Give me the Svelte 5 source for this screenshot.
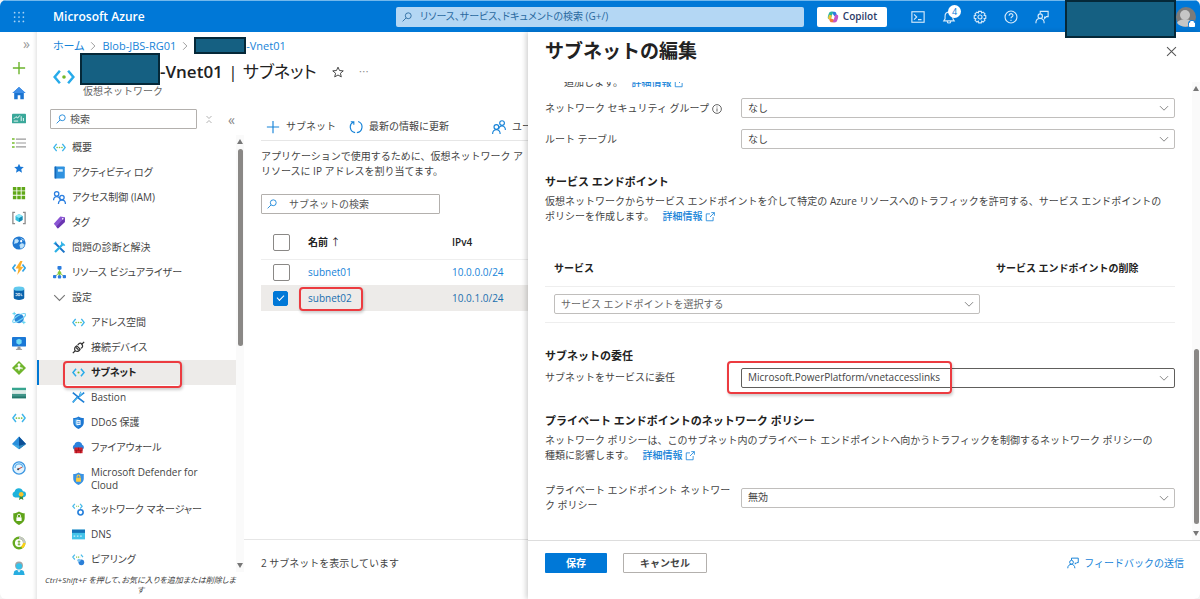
<script>
  const icons = {
    plus: '<path d="M8 1v14M1 8h14" stroke="#6bb42c" stroke-width="1.6"/>',
    home: '<path d="M8 1 0.5 8h2v7h4v-4.500h3V15h4V8h2z" fill="#1b74d1"/><path d="M8 1 0.500 8h15z" fill="#3f8fe8"/>',
    dashboard: '<rect y="3" width="16" height="11" rx="1" fill="#3aa89a"/><path d="M2 9l2.500-2.500 2 1.500L9 5M2 11.500h5M10.500 6v5.500M13 8v3.500" stroke="#fff" fill="none"/>',
    list: '<path d="M4.500 3.500H16M4.500 8H16M4.500 12.500H16" stroke="#999" stroke-width="1.300"/><path d="M0 3.500h3M0 8h3M0 12.500h3" stroke="#76bc2d" stroke-width="1.800"/>',
    star: '<path d="M8 3l1.600 3.500 3.900.4-2.900 2.600.8 3.800L8 11.400l-3.400 1.900.8-3.800-2.900-2.600 3.900-.4z" fill="#1a78d6"/>',
    grid: '<path d="M1 1h4v4H1zM6 1h4v4H6zM11 1h4v4h-4zM1 6h4v4H1zM6 6h4v4H6zM11 6h4v4h-4zM1 11h4v4H1zM6 11h4v4H6zM11 11h4v4h-4z" fill="#60a818"/>',
    group: '<path d="M3.500 1.500H1v13h2.500M12.500 1.500H15v13h-2.500" stroke="#8d8d8d" stroke-width="1.500" fill="none"/><path d="M8 3.500l4 2.200v4.600l-4 2.200-4-2.200V5.700z" fill="#32bedd"/><path d="M8 8l4-2.300v4.600l-4 2.200z" fill="#198ab3"/><path d="M8 3.500l4 2.200L8 8 4 5.700z" fill="#8fe9fb"/>',
    globe: '<circle cx="8" cy="8" r="7.500" fill="#1f78d1"/><path d="M3 4.500c3-2 5 0 4 2s-3 1-4.500 2M9 10c2-2 4-1 5 0-.5 2-2 3.500-4 4zM10 2.500c1 1 2 1.500 4 2.500" fill="#bfe3fb" stroke="#bfe3fb"/><circle cx="10.500" cy="6" r="1.300" fill="#fff"/>',
    bolt: '<path d="M4 4L1 8l3 4M12 4l3 4-3 4" fill="none" stroke="#32a5e8" stroke-width="1.800"/><path d="M9.500 0L4 8.500h3.500L6 16l7-9.500H9.500L12 0z" fill="#fbaf2c"/>',
    sql: '<path d="M2 3v10.500C2 15 5 16 8 16s6-1 6-2.500V3z" fill="#0b64ad"/><ellipse cx="8" cy="3" rx="6" ry="2.500" fill="#62c9ee"/><path d="M4 8.500h2v2.500H4M7 8.500h2V11H7zM10.500 8.500V11H12" stroke="#fff" stroke-width=".8" fill="none"/>',
    cosmos: '<circle cx="8" cy="8.500" r="5.500" fill="#2a86d8"/><path d="M1 13C-.5 9 12 1 15.500 3.500c1.500 2-6 8-14 10" stroke="#6fd2f5" stroke-width="1.300" fill="none"/><path d="M2.500 1v4M.5 3h4M13.500 11v4M11.500 13h4" stroke="#50d0ee"/>',
    vm: '<rect y="1" width="16" height="11" rx="1" fill="#1b78d6"/><path d="M6.500 12h3l.5 3H6z" fill="#9a9a9a"/><path d="M4.500 15.300h7" stroke="#8a8a8a"/><path d="M8 3l3 1.700v3.500L8 10 5 8.200V4.700z" fill="#70dcf6"/>',
    balancer: '<path d="M8 0l8 8-8 8-8-8z" fill="#6fb52c"/><path d="M8 3v8M4 8h8M8 3L6.500 5M8 3l1.500 2M4.500 8v1.500M11.500 8v1.500" stroke="#fff" stroke-width="1.200" fill="none"/><circle cx="8" cy="8" r="2" fill="#fff"/>',
    storage: '<rect y="2" width="16" height="3" fill="#37a58f"/><rect y="5" width="16" height="4" fill="#dcebe7"/><rect y="9" width="16" height="5" fill="#3f9488"/><rect y="12" width="16" height="2" fill="#25776c"/>',
    vnet: '<path d="M4.500 3.500L1 8l3.500 4.500M11.500 3.500L15 8l-3.500 4.500" fill="none" stroke="#3fb6ea" stroke-width="1.700"/><path d="M5 8h.1M8 8h.1M11 8h.1" stroke="#86c440" stroke-width="2" stroke-linecap="round"/>',
    subnet: '<path d="M5 3.500L1.200 8 5 12.500M11 3.500L14.800 8 11 12.500" fill="none" stroke="#28abea" stroke-width="1.800"/><circle cx="8" cy="8" r="1.300" fill="#72b82a"/>',
    entra: '<path d="M8 0.500L0 9l8 6 8-6z" fill="#2a8fdc"/><path d="M8 .5V15l8-6z" fill="#0d4f96"/><path d="M0 9l8 2 8-2-8 6z" fill="#56c5ee" opacity=".5"/>',
    monitor: '<circle cx="8" cy="8" r="7" fill="#e4f3fd" stroke="#3f98e2" stroke-width="1.500"/><path d="M3.500 8a4.500 4.500 0 0 1 9-.5" fill="none" stroke="#5ab0ee" stroke-width="1.500"/><path d="M7 9.500l4.500-2.500" stroke="#d04b3a" stroke-width="1.300"/><circle cx="7" cy="9.500" r="1.200" fill="#33475b"/>',
    advisor: '<path d="M3.500 13A3.500 3.500 0 0 1 3 6.200 5 5 0 0 1 12.500 6 3.500 3.500 0 0 1 12.500 13z" fill="#1eb3dc"/><path d="M9 11l-1 5 2.500-1.300L13 16l-1-5z" fill="#2f8a3e"/><circle cx="10.500" cy="9.500" r="2.700" fill="#f7c32e"/>',
    shieldGreen: '<path d="M8 .5c2 1.500 4 2 6.500 2V8c0 4-3.500 6.500-6.500 8-3-1.500-6.500-4-6.500-8V2.500C4 2.500 6 2 8 .5z" fill="#5fa41a"/><rect x="5" y="7" width="6" height="4.500" rx=".7" fill="#fff"/><path d="M6.200 7V5.500a1.800 1.800 0 0 1 3.600 0V7" stroke="#fff" fill="none"/>',
    cost: '<circle cx="8" cy="8" r="6" fill="#fff" stroke="#65aa20" stroke-width="2.800"/><path d="M8 2a6 6 0 0 1 6 6" stroke="#c5c5c5" stroke-width="2.800" fill="none"/><path d="M14 8a6 6 0 0 1-3 5" stroke="#fcd116" stroke-width="2.800" fill="none"/><path d="M8 5v6M6.500 6.500h3M6.500 9.500h3" stroke="#65aa20"/>',
    support: '<circle cx="8" cy="5" r="4.500" fill="#a3a3a3"/><circle cx="8" cy="6" r="3.500" fill="#35c2ea"/><path d="M1.500 16l1-4c1-2.500 10-2.500 11 0l1 4z" fill="#27ade0"/><path d="M6 10.500l2 2.500 2-2.500z" fill="#fff"/>',
    log: '<rect x="2" y="0.500" width="12.500" height="15" rx="1" fill="#2f92e0"/><path d="M2 .5h2v15H2z" fill="#1667b7"/><rect x="6" y="4" width="6" height="3" fill="#d7effd"/>',
    people: '<circle cx="4.500" cy="3.500" r="2.700" /><path d="M0.700 11.500c0-6 7.600-6 7.600-1"/><circle cx="11" cy="8" r="2.700"/><path d="M6.700 16c0-6.500 8.600-6.500 8.600 0"/>',
    tag: '<path d="M9 .5l5.500 1v6L6 15.500 1 9.500z" fill="#8a55d3"/><path d="M14.500 1.500v6L6 15.500l-2-2.300z" fill="#6a36b0"/><circle cx="12" cy="3.500" r="1" fill="#fff"/>',
    tools: '<path d="M2.500 2.500L14 14" stroke="#1b74c8" stroke-width="2.500"/><path d="M13 3L2.500 13.500" stroke="#2bb0e6" stroke-width="2.700"/><path d="M11 .8c-1.500 2 .5 5 3.800 4M1 3.800L4 1" stroke="#2bb0e6" stroke-width="1.500" fill="none"/>',
    tree: '<path d="M8 3v6M8 8L2.500 13M8 8l5.500 5M8 8v5" stroke="#88c24b" stroke-width="1.200"/><rect x="5.500" y="0" width="5" height="4.500" rx="1" fill="#2b7de0"/><circle cx="8" cy="8.500" r="2.300" fill="#86c83c"/><rect x="0" y="11" width="4" height="4" rx="1" fill="#2b7de0"/><rect x="6" y="11.500" width="4" height="4" rx="1" fill="#2b7de0"/><rect x="12" y="11" width="4" height="4" rx="1" fill="#2b7de0"/>',
    chevron: '<path d="M1.500 5L8 11.500 14.500 5" fill="none" stroke="#777" stroke-width="1.400"/>',
    plug: '<g fill="none" stroke="#333" stroke-width="1.500"><path d="M1 15l3-3M12 4l3-3"/><path d="M4 12c-2-3 0-5 2-6l4 4c-1 2-3 4-6 2z"/><path d="M7 5c2-3 4-3 5-1 2 2 1 4-1 5M5 8l3 3"/></g>',
    bastion: '<path d="M1 2l6 5-6 7M15 2L7 8l8 6" fill="none" stroke="#1d7fd6" stroke-width="2"/><path d="M9 5l2-4M9 7l4-4M1 14l6-6" stroke="#47b4ec" stroke-width="1.400"/>',
    shieldBlue: '<path d="M8 .5c2 1.500 4 2 6.500 2V8c0 4-3.500 6.500-6.500 8-3-1.500-6.500-4-6.500-8V2.500C4 2.500 6 2 8 .5z" fill="#1c77d2"/><path d="M8 2.500v11c-3-1.500-5-3-5-6V4c2 0 3.500-.5 5-1.500z" fill="#4ba5ea"/><rect x="5.500" y="5" width="5" height="6" fill="#fff"/><path d="M6.500 7h3M6.500 9h3" stroke="#1c77d2"/>',
    firewall: '<path d="M3.500 11A3.500 3.500 0 0 1 3 4.500a5 5 0 0 1 9.500 0A3.500 3.500 0 0 1 12.500 11z" fill="#2b83df"/><rect x="3" y="8" width="10" height="7" fill="#d3232e"/><path d="M3 11.500h10M8 8v3.500M5.500 11.500V15M10.500 11.500V15" stroke="#8e1019" stroke-width=".8"/>',
    defender: '<path d="M8 .5c2 1.500 4 2 6.500 2V8c0 4-3.500 6.500-6.500 8-3-1.500-6.500-4-6.500-8V2.500C4 2.500 6 2 8 .5z" fill="#3a93e4"/><rect x="5" y="7" width="6" height="5" rx=".7" fill="#ffca3a"/><path d="M6.200 7V5.500a1.800 1.800 0 0 1 3.600 0V7" stroke="#ffca3a" stroke-width="1.300" fill="none"/>',
    manager: '<path d="M3.500 1L1 4l2.500 3M10 1l2.500 3L10 7" fill="none" stroke="#4abbe9" stroke-width="1.500"/><path d="M5 4h4" stroke="#86c440" stroke-width="1.500" stroke-dasharray="1.300 1"/><circle cx="10.500" cy="11.500" r="3.200" fill="#fff" stroke="#2680dc" stroke-width="2"/>',
    dns: '<rect y="2" width="16" height="12" fill="#43c3ea"/><rect y="2" width="16" height="4" fill="#1573b8"/><path d="M2 10h2M6 10h2M10 10h2" stroke="#c7f1fd" stroke-width="1.300"/>',
    peering: '<path d="M3.500 2L1 5l2.500 3M11 2l2.500 3" fill="none" stroke="#4abbe9" stroke-width="1.500"/><path d="M5 5h5" stroke="#86c440" stroke-width="1.500" stroke-dasharray="1.300 1"/><circle cx="11.500" cy="11.500" r="3.500" fill="#2b7fd8"/><circle cx="8.500" cy="9" r="2" fill="#7cc5f2"/>',
    search: '<circle cx="10" cy="6" r="4.700" fill="none" stroke="currentColor" stroke-width="1.400"/><path d="M6.500 9.500L1 15" stroke="currentColor" stroke-width="1.400"/>',
    shell: '<rect x="1" y="2" width="14" height="12" /><path d="M3.500 5l3 3-3 3M8 11h4"/>',
    bell: '<path d="M2 12.500h12l-1.500-2.500V7c0-6-9-6-9 0v3zM6 13c0 2.500 4 2.500 4 0"/>',
    gear: '<path d="M6.500 1.500h3l.4 1.900 1.700-1 2.100 2.100-1 1.700 1.900.4v3l-1.900.4 1 1.700-2.100 2.100-1.700-1-.4 1.900h-3l-.4-1.900-1.700 1-2.100-2.100 1-1.700-1.900-.4v-3l1.900-.4-1-1.700 2.100-2.100 1.700 1z"/><circle cx="8" cy="8" r="2.300"/>',
    help: '<circle cx="8" cy="8" r="6.800"/><path d="M5.800 6.500c0-3 4.400-3 4.400-.3 0 1.500-2.200 1.600-2.200 3.300M8 11v1.500"/>',
    feedback: '<path d="M6 4V1.500h9v6h-2l-2 2v-2"/><circle cx="6" cy="7" r="2.500"/><path d="M1 15c0-7 9.500-7 9.500 0"/>',
    close: '<path d="M1.500 1.500l13 13M14.500 1.500l-13 13" stroke="#555" stroke-width="1.500"/>',
    external: '<path d="M8 3H2v11h11V8M10 1h5v5M15 1L8 8"/>',
    info: '<circle cx="8" cy="8" r="7"/><path d="M8 7v5M8 4v1.500"/>',
    add: '<path d="M8 1v14M1 8h14"/>',
    refresh: '<path d="M5 2.200a6.500 6.500 0 0 0 2 12.200M10.500 1.800a6.500 6.500 0 0 1-1.500 12.600M2 2h3.500v3.500"/>',
    favorite: '<path d="M8 1.500l2 4.500 5 .5-3.800 3.200 1.200 4.800L8 12l-4.400 2.500 1.200-4.800L1 6.500 6 6z"/>',
    copilot: '<path d="M5 1h5c1.500 0 2 1 2.500 2.500L14 8l-4-1-3-4z" fill="#2a7de1"/><path d="M5 1C3 1 2.500 3 1.500 6S1 11 3 11h2l2.500-8C8 1.500 8 1 10 1z" fill="#2cb5a0"/><path d="M3 11h2L6.500 6 3 5C1 9 1 11 3 11z" fill="#f4c430"/><path d="M11 15H6c-1.500 0-2-1-2.500-2.500L3 11l3-1 4 2z" fill="#f0793a"/><path d="M11 15c2 0 2.500-2 3.500-5s.5-5-1.500-5h-2l-2.500 8c-.5 1.500-1 2-2.500 2z" fill="#c456c9"/>',
  };

  const rail = [
    "plus", "home", "dashboard", "list", "star", "grid", "group", "globe",
    "bolt", "sql", "cosmos", "vm", "balancer", "storage", "vnet", "entra",
    "monitor", "advisor", "shieldGreen", "cost", "support",
  ];

  const menu = [
    { icon: "vnet", label: "概要" },
    { icon: "log", label: "アクティビティ ログ" },
    { icon: "people", label: "アクセス制御 (IAM)", line: true },
    { icon: "tag", label: "タグ" },
    { icon: "tools", label: "問題の診断と解決" },
    { icon: "tree", label: "リソース ビジュアライザー" },
    { icon: "chevron", label: "設定" },
    { icon: "vnet", label: "アドレス空間", sub: true },
    { icon: "plug", label: "接続デバイス", sub: true },
    { icon: "subnet", label: "サブネット", sub: true, selected: true },
    { icon: "bastion", label: "Bastion", sub: true },
    { icon: "shieldBlue", label: "DDoS 保護", sub: true },
    { icon: "firewall", label: "ファイアウォール", sub: true },
    { icon: "defender", label: "Microsoft Defender for Cloud", sub: true },
    { icon: "manager", label: "ネットワーク マネージャー", sub: true },
    { icon: "dns", label: "DNS", sub: true },
    { icon: "peering", label: "ピアリング", sub: true },
  ];

  let subnets = $state([
    { name: "subnet01", ipv4: "10.0.0.0/24", checked: false },
    { name: "subnet02", ipv4: "10.0.1.0/24", checked: true },
  ]);

  let menuQuery = $state("");
  let subnetQuery = $state("");
</script>

{#snippet icon(name, cls = "")}
  <svg class="icon {cls}" viewBox="0 0 16 16" aria-hidden="true">{@html icons[name]}</svg>
{/snippet}

{#snippet dropdown(id, value, cls = "")}
  <div class="dropdown {cls}">
    <select {id} aria-label={value}><option>{value}</option></select>
    {@render icon("chevron")}
  </div>
{/snippet}

{#snippet more()}
  <a class="more" href="#more">詳細情報 {@render icon("external", "line tiny")}</a>
{/snippet}

<div class="app">
  <header class="topbar">
    <div class="brand">
      <button class="waffle" aria-label="メニュー">
        <svg class="icon" viewBox="0 0 16 16">
          {#each [3, 8, 13] as y}
            {#each [3, 8, 13] as x}
              <circle cx={x} cy={y} r="1" fill="#a9d3f5" />
            {/each}
          {/each}
        </svg>
      </button>
      <span>Microsoft Azure</span>
    </div>
    <label class="global-search">
      {@render icon("search")}
      <input aria-label="検索" placeholder="リソース、サービス、ドキュメントの検索 (G+/)" />
    </label>
    <button class="copilot">{@render icon("copilot")}Copilot</button>
    <div class="actions">
      <button aria-label="Cloud Shell">{@render icon("shell", "line")}</button>
      <button aria-label="通知">{@render icon("bell", "line")}<span class="badge">4</span></button>
      <button aria-label="設定">{@render icon("gear", "line")}</button>
      <button aria-label="ヘルプ">{@render icon("help", "line")}</button>
      <button aria-label="フィードバック">{@render icon("feedback", "line")}</button>
    </div>
    <span class="mask account"></span>
    <svg class="avatar" viewBox="0 0 20 20" aria-hidden="true">
      <circle cx="10" cy="10" r="10" fill="#7b7b7b" />
      <circle cx="9" cy="8" r="5" fill="#c6c6c6" />
      <path d="M1 16c2-5 14-5 16 0-3 5-12 5-16 0z" fill="#c6c6c6" />
      <circle cx="16" cy="17" r="4" fill="#0f7bd8" />
      <path d="M13.500 16h5v3.500h-5zM14.700 16v-1.500h2.600V16" fill="#fff" stroke="#fff" />
    </svg>
  </header>

  <div class="shell">
    <nav class="rail">
      <button class="expand" aria-label="展開">»</button>
      {#each rail as name}
        <button aria-label={name}>{@render icon(name)}</button>
      {/each}
    </nav>

    <section class="blade">
      <div class="blade-head">
        <div class="crumbs">
          <a href="#home">ホーム</a>
          <svg class="icon line" viewBox="0 0 16 16"><path d="M5 2l6 6-6 6" /></svg>
          <a href="#rg">Blob-JBS-RG01</a>
          <svg class="icon line" viewBox="0 0 16 16"><path d="M5 2l6 6-6 6" /></svg>
          <span class="mask crumb-mask"></span><a href="#vnet">-Vnet01</a>
        </div>
        <div class="title">
          {@render icon("subnet")}
          <span class="mask title-mask"></span>
          <h1><b>-Vnet01</b> <span>|</span> サブネット</h1>
          <button aria-label="お気に入り">{@render icon("favorite", "line")}</button>
          <button class="dots" aria-label="その他">⋯</button>
        </div>
        <div class="kind">仮想ネットワーク</div>
      </div>

      <div class="blade-body">
        <aside class="menu">
          <div class="menu-search">
            <label class="field">
              {@render icon("search")}
              <input aria-label="検索" placeholder="検索" bind:value={menuQuery} />
            </label>
            <button aria-label="すべて折りたたむ">
              <svg class="icon line" viewBox="0 0 16 16"><path d="M3 1l5 5 5-5M3 15l5-5 5 5" /></svg>
            </button>
            <button aria-label="閉じる">«</button>
          </div>
          <div class="menu-scroll">
            <ul>
              {#each menu as item}
                <li class:sub={item.sub} class:selected={item.selected}>
                  <a href="#menu">
                    {@render icon(item.icon, item.line ? "line" : "")}
                    <span>{item.label}</span>
                  </a>
                  {#if item.selected}<span class="mark menu-mark"></span>{/if}
                </li>
              {/each}
            </ul>
            <div class="scrollbar">
              <span class="up"></span>
              <span class="thumb"></span>
              <span class="down"></span>
            </div>
          </div>
          <p class="hint">Ctrl+Shift+F を押して、お気に入りを追加または削除しま<br />す</p>
        </aside>

        <main>
          <div class="toolbar">
            <button>{@render icon("add", "line")}サブネット</button>
            <button>{@render icon("refresh", "line")}最新の情報に更新</button>
            <span class="sep"></span>
            <button>{@render icon("people", "line flip")}ユー</button>
          </div>
          <p class="intro">
            アプリケーションで使用するために、仮想ネットワーク ア<br />リソースに IP アドレスを割り当てます。
          </p>
          <label class="field subnet-search">
            {@render icon("search")}
            <input aria-label="サブネットの検索" placeholder="サブネットの検索" bind:value={subnetQuery} />
          </label>
          <table class="subnets">
            <thead>
              <tr>
                <th class="check"><input type="checkbox" aria-label="すべて選択" /></th>
                <th class="name">名前 <span>↑</span></th>
                <th>IPv4</th>
              </tr>
            </thead>
            <tbody>
              {#each subnets as subnet}
                <tr class:active={subnet.checked}>
                  <td class="check">
                    <input type="checkbox" aria-label={subnet.name} bind:checked={subnet.checked} />
                  </td>
                  <td class="name">
                    <a href="#subnet">{subnet.name}</a>
                    {#if subnet.checked}<span class="mark row-mark"></span>{/if}
                  </td>
                  <td><a href="#range">{subnet.ipv4}</a></td>
                </tr>
              {/each}
            </tbody>
          </table>
          <footer>2 サブネットを表示しています</footer>
        </main>
      </div>
    </section>

    <section class="panel">
      <div class="panel-head">
        <h2>サブネットの編集</h2>
        <button aria-label="閉じる">{@render icon("close")}</button>
      </div>
      <div class="panel-scroll">
        <form id="edit" class="panel-body">
          <p class="cut">追加します。 {@render more()}</p>
          <div class="row">
            <label for="nsg">ネットワーク セキュリティ グループ {@render icon("info", "line tiny")}</label>
            {@render dropdown("nsg", "なし")}
          </div>
          <div class="row">
            <label for="route">ルート テーブル</label>
            {@render dropdown("route", "なし")}
          </div>

          <h3>サービス エンドポイント</h3>
          <p>
            仮想ネットワークからサービス エンドポイントを介して特定の Azure リソースへのトラフィックを許可する、サービス エンドポイントの<br />ポリシーを作成します。 {@render more()}
          </p>
          <table class="services">
            <thead>
              <tr><th>サービス</th><th>サービス エンドポイントの削除</th></tr>
            </thead>
            <tbody>
              <tr>
                <td>
                  {@render dropdown("service", "サービス エンドポイントを選択する", "placeholder")}
                </td>
                <td></td>
              </tr>
            </tbody>
          </table>

          <h3>サブネットの委任</h3>
          <div class="row tight">
            <label for="delegation">サブネットをサービスに委任</label>
            {@render dropdown("delegation", "Microsoft.PowerPlatform/vnetaccesslinks", "focus")}
            <span class="mark delegate-mark"></span>
          </div>

          <h3>プライベート エンドポイントのネットワーク ポリシー</h3>
          <p>
            ネットワーク ポリシーは、このサブネット内のプライベート エンドポイントへ向かうトラフィックを制御するネットワーク ポリシーの<br />種類に影響します。 {@render more()}
          </p>
          <div class="row policy">
            <label for="policy">プライベート エンドポイント ネットワーク ポリシー</label>
            {@render dropdown("policy", "無効")}
          </div>
        </form>
        <div class="scrollbar low">
          <span class="up"></span>
          <span class="thumb"></span>
          <span class="down"></span>
        </div>
      </div>
      <div class="panel-foot">
        <button class="primary" form="edit">保存</button>
        <button class="secondary">キャンセル</button>
        <a href="#feedback">{@render icon("feedback", "line")}フィードバックの送信</a>
      </div>
    </section>
  </div>
</div>

<style>
  :global(body) {
    background: #f4f4f4;
  }

  .app {
    display: flex;
    flex-direction: column;
    height: 100vh;
    overflow: hidden;
    border-radius: 6px;
    background: #fff;
    color: #444;
    font-family: "Open Sans", "Noto Sans CJK JP", sans-serif;
    font-size: 10px;
    line-height: 15px;
  }

  .app * {
    box-sizing: border-box;
  }

  button,
  input,
  select {
    font: inherit;
    color: inherit;
  }

  button {
    display: inline-flex;
    align-items: center;
    justify-content: center;
    padding: 0;
    border: 0;
    background: none;
    cursor: pointer;
  }

  a {
    color: #1683d8;
    text-decoration: none;
  }

  h1,
  h2,
  h3,
  p,
  ul {
    margin: 0;
    padding: 0;
  }

  .icon {
    flex: none;
    width: 14px;
    height: 14px;
  }

  .line {
    fill: none;
    stroke: currentColor;
    stroke-width: 1.3;
  }

  .tiny {
    width: 10px;
    height: 10px;
    vertical-align: middle;
  }

  .flip {
    transform: scaleX(-1);
  }

  .mask {
    flex: none;
    background: #156082;
    border: 2px solid #052838;
  }

  .mark {
    position: absolute;
    border: 2px solid #ec3b40;
    border-radius: 4px;
    box-shadow: 1px 2px 3px rgba(0, 0, 0, 0.2);
    pointer-events: none;
  }

  /* top bar */
  .topbar {
    display: flex;
    align-items: center;
    flex: none;
    height: 32px;
    background: #0078d7;
    border-top: 1px solid #73b8ec;
    color: #fff;
  }

  .brand {
    display: flex;
    align-items: center;
    flex: 0 0 33%;
    font-size: 12px;
    font-weight: 600;
  }

  .waffle {
    width: 37px;
    margin-right: 16px;
  }

  .global-search {
    display: flex;
    align-items: center;
    flex: 0 0 34%;
    gap: 8px;
    height: 20px;
    padding: 0 6px;
    border-radius: 2px;
    background: #b4d7f4;
    color: #29699f;
    font-feature-settings: "palt";
  }

  .global-search .icon {
    width: 10px;
    height: 10px;
  }

  .global-search input {
    flex: 1;
    min-width: 0;
    padding: 0;
    border: 0;
    outline: 0;
    background: none;
  }

  input::placeholder {
    color: inherit;
    opacity: 1;
  }

  .copilot {
    gap: 4px;
    width: 70px;
    height: 20px;
    margin: 0 15px 0 13px;
    border-radius: 2px;
    background: #fff;
    color: #2b3a67;
    font-weight: 600;
  }

  .copilot .icon {
    width: 12px;
    height: 12px;
  }

  .actions {
    display: flex;
    color: #d4e9fa;
  }

  .actions button {
    position: relative;
    width: 31px;
  }

  .badge {
    position: absolute;
    top: -5px;
    right: 3px;
    width: 13px;
    height: 13px;
    border-radius: 50%;
    background: #fff;
    color: #0078d7;
    font-size: 9px;
    line-height: 13px;
  }

  .account {
    align-self: flex-start;
    z-index: 1;
    width: 111px;
    height: 38px;
    margin: -1px 0 0 auto;
  }

  .avatar {
    flex: none;
    width: 20px;
    height: 20px;
    margin-right: 4px;
  }

  .shell {
    display: flex;
    flex: 1;
    min-height: 0;
  }

  /* favourites rail */
  .rail {
    display: flex;
    flex-direction: column;
    flex: 0 0 37px;
    box-shadow: inset -4px 0 4px -3px #ddd;
  }

  .rail button {
    flex: none;
    height: 25px;
  }

  .rail .expand {
    height: 23px;
    padding-left: 16px;
    color: #999;
    font-size: 14px;
  }

  /* blade */
  .blade {
    display: flex;
    flex: 1;
    flex-direction: column;
    min-width: 0;
    overflow: hidden;
    white-space: nowrap;
  }

  .blade-head {
    padding: 6px 0 0 16px;
  }

  .crumbs {
    display: flex;
    align-items: center;
    height: 15px;
    font-size: 11px;
    font-feature-settings: "palt";
  }

  .crumbs .icon {
    width: 10px;
    height: 10px;
    margin: 0 4px;
    color: #888;
  }

  .crumb-mask {
    width: 52px;
    height: 17px;
  }

  .title {
    display: flex;
    align-items: center;
    height: 32px;
  }

  .title .icon {
    width: 22px;
    height: 22px;
    margin-top: 16px;
  }

  .title-mask {
    width: 80px;
    height: 32px;
    margin-left: 5px;
  }

  h1 {
    padding-top: 6px;
    font-size: 17px;
    font-weight: 400;
    line-height: 24px;
    color: #222;
    font-feature-settings: "palt";
  }

  h1 b {
    font-weight: 600;
  }

  h1 span {
    padding: 0 1px;
  }

  .title button {
    margin: 6px 0 0 15px;
  }

  .title button .icon {
    width: 12px;
    height: 12px;
    margin: 0;
  }

  .title .dots {
    color: #888;
  }

  .kind {
    padding-left: 30px;
    line-height: 12px;
    color: #666;
  }

  .blade-body {
    display: flex;
    flex: 1;
    min-height: 0;
  }

  .field {
    display: flex;
    align-items: center;
    gap: 4px;
    height: 20px;
    padding: 0 5px;
    border: 1px solid #b3b0ad;
    border-radius: 1px;
    color: #555;
  }

  .field .icon {
    width: 10px;
    height: 10px;
    color: #1683d8;
  }

  .field input {
    flex: 1;
    min-width: 0;
    padding: 0;
    border: 0;
    outline: 0;
  }

  /* resource menu */
  .menu {
    display: flex;
    flex: 0 0 207px;
    flex-direction: column;
    min-width: 0;
    padding-top: 12px;
    font-feature-settings: "palt";
  }

  .menu-search {
    display: flex;
    padding-left: 13px;
    margin-bottom: 6px;
  }

  .menu-search .field {
    width: 147px;
  }

  .menu-search button {
    flex: 0 0 23px;
    color: #888;
    font-size: 14px;
  }

  .menu-search button .icon {
    width: 8px;
    height: 9px;
  }

  .menu-scroll {
    display: flex;
    flex: 1;
    min-height: 0;
  }

  .menu ul {
    flex: 1;
    min-width: 0;
    list-style: none;
    overflow: hidden;
  }

  .menu li {
    position: relative;
  }

  .menu li a {
    display: flex;
    align-items: center;
    gap: 6px;
    min-height: 25px;
    padding: 0 28px 0 16px;
    color: #444;
    line-height: 13px;
    white-space: normal;
  }

  .menu li .icon {
    width: 13px;
    height: 13px;
  }

  .menu li .line {
    color: #2b7fe0;
    stroke-width: 1.6;
  }

  .menu li.sub a {
    padding: 0 28px 0 35px;
  }

  .menu li:nth-child(14) a {
    min-height: 37px;
  }

  .menu li.selected {
    background: #edebe9;
    box-shadow: inset 2px 0 #0078d4;
  }

  .menu li.selected a {
    color: #222;
    font-weight: 600;
  }

  .menu-mark {
    inset: 1px 54px -3px 26px;
  }

  .hint {
    padding: 3px 0 4px;
    font-size: 8px;
    font-style: italic;
    line-height: 10px;
    text-align: center;
  }

  .scrollbar {
    display: flex;
    flex: 0 0 8px;
    flex-direction: column;
    align-items: center;
    padding: 4px 0;
    background: #fafafa;
  }

  .scrollbar .thumb {
    width: 5px;
    height: 46%;
    margin: 5px 0 auto;
    border-radius: 3px;
    background: #8a8886;
  }

  .scrollbar.low .thumb {
    height: 39%;
    margin: auto 0 7px;
  }

  .up,
  .down {
    border: 3px solid transparent;
    border-top: 0;
    border-bottom: 5px solid #777;
  }

  .down {
    border-top: 5px solid #777;
    border-bottom: 0;
  }

  /* subnet list */
  main {
    display: flex;
    flex: 1;
    flex-direction: column;
    min-width: 0;
    padding: 16px 0 0 17px;
  }

  .toolbar {
    display: flex;
    align-items: center;
    flex: none;
    height: 28px;
    padding-left: 5px;
    border-bottom: 1px solid #e6e6e6;
  }

  .toolbar button {
    gap: 6px;
    margin-right: 13px;
  }

  .toolbar .icon {
    color: #1683d8;
  }

  .sep {
    width: 1px;
    height: 11px;
    margin: 0 22px 0 8px;
    background: #aaa;
  }

  .intro {
    margin: 8px 0 15px;
  }

  .subnet-search {
    flex: none;
    gap: 12px;
    width: 179px;
    margin-bottom: 12px;
  }

  table {
    width: 100%;
    border-collapse: collapse;
    table-layout: fixed;
  }

  th,
  td {
    padding: 0;
    text-align: left;
  }

  th {
    color: #222;
    font-weight: 600;
  }

  .subnets thead tr {
    height: 33px;
    border-bottom: 1px solid #eee;
  }

  .subnets tbody tr {
    height: 26px;
  }

  .subnets .active {
    background: #edebe9;
  }

  .subnets .active a {
    color: #1a6faf;
  }

  .check {
    width: 47px;
    padding-left: 12px;
  }

  .name {
    position: relative;
    width: 144px;
  }

  .name span {
    font-weight: 400;
  }

  .row-mark {
    inset: 2px 89px 0 -9px;
  }

  input[type="checkbox"] {
    display: grid;
    place-items: center;
    appearance: none;
    width: 17px;
    height: 17px;
    margin: 0;
    border: 1px solid #8a8886;
    border-radius: 2px;
    background: #fff;
  }

  input[type="checkbox"]:checked {
    width: 15px;
    height: 15px;
    border-color: #0078d7;
    background: #0078d7;
  }

  input[type="checkbox"]:checked::after {
    content: "";
    width: 6px;
    height: 3px;
    margin-bottom: 2px;
    border: solid #fff;
    border-width: 0 0 1px 1px;
    transform: rotate(-45deg);
  }

  main footer {
    margin: auto 0 0 -17px;
    padding: 16px 17px 28px;
    border-top: 1px solid #e6e6e6;
  }

  /* edit panel */
  .panel {
    display: flex;
    flex: 0 0 56%;
    flex-direction: column;
    min-width: 0;
    background: #fff;
    box-shadow: -2px 0 5px rgba(0, 0, 0, 0.18);
  }

  .panel-head {
    display: flex;
    align-items: center;
    justify-content: space-between;
    flex: none;
    height: 50px;
    padding: 0 23px 12px 17px;
  }

  h2 {
    font-size: 19px;
    font-weight: 600;
    line-height: 28px;
    color: #222;
  }

  .panel-head .icon {
    width: 11px;
    height: 11px;
  }

  .panel-scroll {
    display: flex;
    flex: 1;
    min-height: 0;
  }

  .panel-body {
    flex: 1;
    min-width: 0;
    padding: 0 17px;
    overflow: hidden;
  }

  .panel .cut {
    margin: -7px 0 8px 19px;
  }

  .more {
    margin-left: 6px;
    font-weight: 500;
  }

  .row {
    position: relative;
    display: flex;
    align-items: center;
    margin-bottom: 11px;
  }

  .row > label {
    flex: 0 0 196px;
    padding-right: 6px;
  }

  .row.tight {
    margin-bottom: 0;
  }

  .row.policy {
    margin-top: 20px;
  }

  h3 {
    margin: 25px 0 4px;
    font-size: 11px;
    font-weight: 600;
    line-height: 16px;
    color: #222;
  }

  .dropdown {
    position: relative;
    flex: 1;
  }

  .dropdown select {
    display: block;
    appearance: none;
    width: 100%;
    height: 20px;
    padding: 0 24px 0 6px;
    border: 1px solid #c0bebc;
    border-radius: 2px;
    background: #fff;
  }

  .dropdown.focus select {
    border-color: #605e5c;
  }

  .dropdown.placeholder select {
    color: #666;
  }

  .dropdown .icon {
    position: absolute;
    top: 5px;
    right: 6px;
    width: 10px;
    height: 10px;
    pointer-events: none;
  }

  .services {
    margin-top: 27px;
  }

  .services tr {
    height: 36px;
    border-bottom: 1px solid #eee;
  }

  .services thead tr {
    height: 35px;
  }

  .services th:first-child,
  .services td:first-child {
    width: 451px;
    padding: 0 16px 0 9px;
  }

  .delegate-mark {
    inset: -7px 223px -6px 182px;
  }

  .panel-foot {
    display: flex;
    align-items: flex-start;
    gap: 16px;
    flex: none;
    height: 59px;
    padding: 12px 16px 0 17px;
    border-top: 1px solid #ddd;
  }

  .panel-foot button {
    height: 20px;
    border-radius: 1px;
    font-weight: 600;
  }

  .primary {
    width: 62px;
    background: #0078d7;
    color: #fff;
  }

  .panel-foot .secondary {
    width: 84px;
    border: 1px solid #b3b0ad;
  }

  .panel-foot a {
    display: flex;
    align-items: center;
    gap: 5px;
    height: 20px;
    margin-left: auto;
  }

  .panel-foot .icon {
    width: 12px;
    height: 12px;
  }
</style>
